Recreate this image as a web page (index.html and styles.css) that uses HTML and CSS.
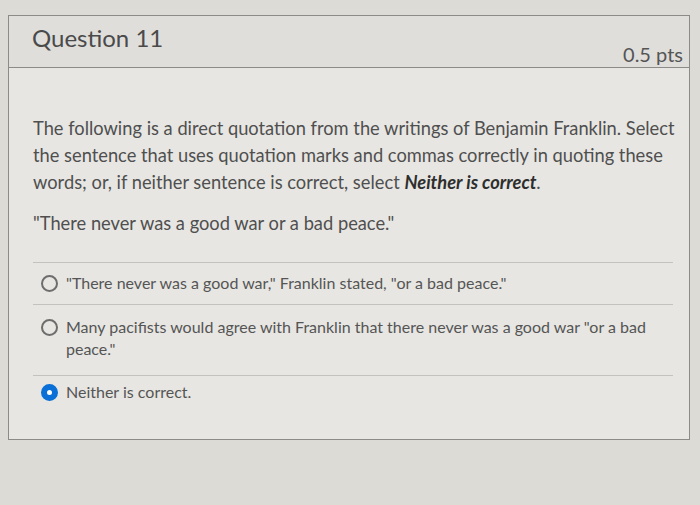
FILE: index.html
```html
<!DOCTYPE html>
<html>
<head>
<meta charset="utf-8">
<link rel="stylesheet" href="styles.css">
</head>
<body>
<div class="card">
  <div class="header">
    <div class="title">Question 11</div>
    <div class="pts">0.5 pts</div>
  </div>
  <div class="body">
    <p class="prompt">The following is a direct quotation from the writings of Benjamin Franklin. Select the sentence that uses quotation marks and commas correctly in quoting these words; or, if neither sentence is correct, select <em class="strong">Neither is correct</em>.</p>
    <p class="quote">"There never was a good war or a bad peace."</p>
    <div class="answers">
      <div class="answer">
        <span class="radio"></span>
        <span class="label">"There never was a good war," Franklin stated, "or a bad peace."</span>
      </div>
      <div class="answer">
        <span class="radio"></span>
        <span class="label">Many pacifists would agree with Franklin that there never was a good war "or a bad peace."</span>
      </div>
      <div class="answer">
        <span class="radio checked"></span>
        <span class="label">Neither is correct.</span>
      </div>
    </div>
  </div>
</div>
</body>
</html>
```
FILE: styles.css
```css
html, body {
  margin: 0;
  padding: 0;
}
body {
  background: #dddbd6;
  font-family: Lato, "Open Sans", sans-serif;
  color: #4f4f4f;
  width: 700px;
  height: 505px;
  overflow: hidden;
  padding: 15px 10px 0 8px;
  box-sizing: border-box;
}
.card {
  border: 1px solid #8c8b88;
  background: #e7e6e2;
}
.header {
  display: flex;
  justify-content: space-between;
  align-items: flex-end;
  height: 52px;
  background: #dfdedb;
  border-bottom: 1px solid #8c8b88;
  padding: 0 6px 0 23px;
  box-sizing: border-box;
}
.title {
  font-size: 24px;
  color: #4a4a4a;
  align-self: center;
  margin-top: -9px;
}
.pts {
  font-size: 20px;
  color: #555;
  margin-bottom: 1px;
}
.body {
  padding: 47px 6px 26px 24px;
}
.prompt {
  margin: 0;
  font-size: 18.3px;
  line-height: 27px;
}
.strong {
  font-weight: bold;
  font-style: italic;
  color: #2e2e2e;
}
.quote {
  margin: 14px 0 0;
  font-size: 18.3px;
  line-height: 27px;
}
.answers {
  margin-top: 25px;
  margin-right: 10px;
  border-top: 1px solid #c3c2be;
}
.answer {
  display: flex;
  align-items: flex-start;
  padding: 9px 0 10px 8px;
  border-bottom: 1px solid #c3c2be;
  font-size: 16px;
  line-height: 22px;
}
.answer:last-child {
  border-bottom: none;
  padding-top: 5px;
}
.answer:nth-child(2) {
  padding-top: 11px;
  padding-bottom: 15px;
}
.radio {
  flex: none;
  width: 13px;
  height: 13px;
  border: 2px solid #6d6d6d;
  border-radius: 50%;
  margin: 3px 8px 0 0;
  box-sizing: content-box;
}
.radio.checked {
  width: 5px;
  height: 5px;
  border: 6px solid #0a6fd6;
  background: #fff;
}
.label {
  color: #555;
}
```
